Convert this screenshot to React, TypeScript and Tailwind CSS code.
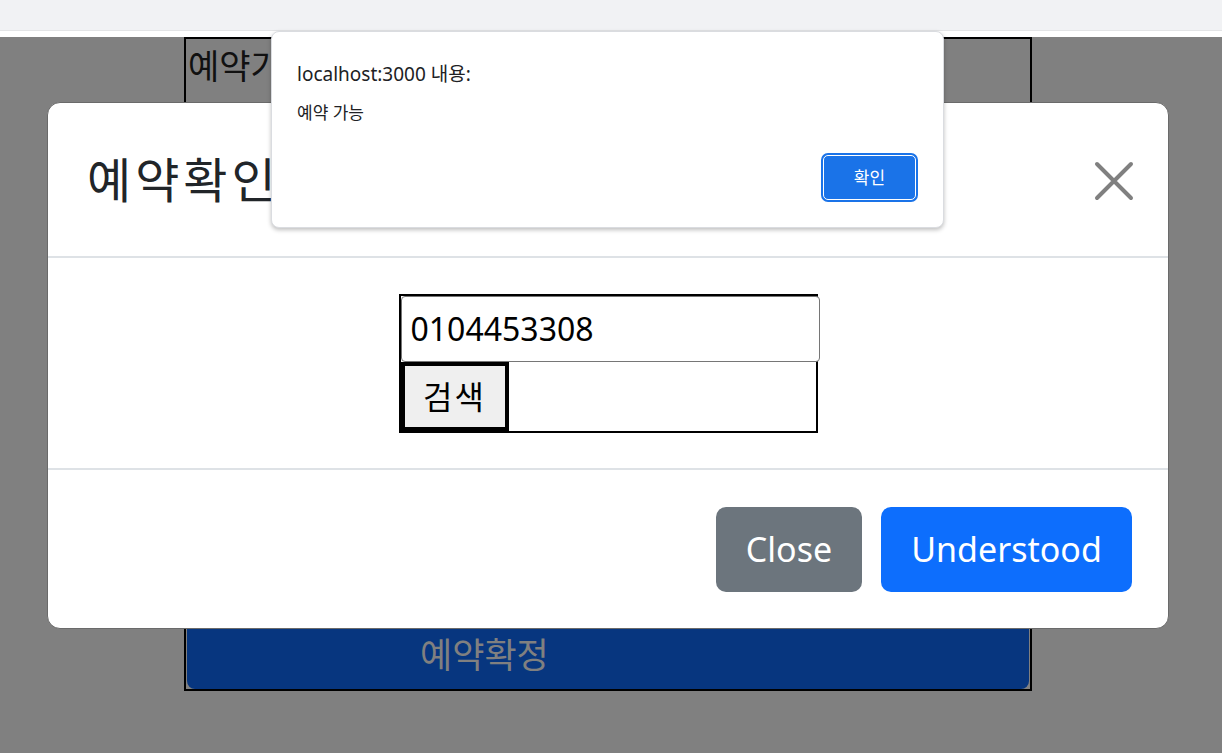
export default function App() {
  return (
    <div
      className="relative w-[1222px] h-[753px] overflow-hidden flex flex-col bg-[#808080]"
      style={{ fontFamily: '"Noto Sans", "Noto Sans CJK KR", sans-serif' }}
    >
      {/* browser strip */}
      <div className="h-[31px] bg-[#f1f2f4] border-b border-[#e3e4e6] shrink-0" />
      <div className="h-[6px] bg-white shrink-0" />

      {/* page underneath the backdrop */}
      <div className="flex-1">
        <div className="ml-[184px] w-[848px] h-[654px] border-2 border-black flex flex-col justify-between">
          <div className="pl-[2px] pt-[2px] text-[34px] leading-[50px] text-[#111]">예약가능</div>
          <div className="h-[62px] bg-[#07367f] rounded-b-[8px] mx-[1px] pl-[233px] pt-[2px] text-[35px] leading-[52px] text-[#808080]">
            예약확정
          </div>
        </div>
      </div>

      {/* modal */}
      <div className="absolute left-[47px] top-[102px] w-[1122px] h-[527px] bg-white rounded-[13px] border border-[#6a6a6a] flex flex-col">
        <div className="h-[155px] border-b-2 border-[#dee2e6] flex items-center justify-between pl-[39px] pr-[34px] shrink-0">
          <h5 className="text-[48px] tracking-[4px] text-[#212529] leading-none">예약확인</h5>
          <svg width="40" height="40" viewBox="0 0 40 40" className="mt-[2px]">
            <path d="M3 3 L37 37 M37 3 L3 37" stroke="#808080" strokeWidth="4" strokeLinecap="round" />
          </svg>
        </div>
        <div className="h-[212px] border-b-2 border-[#dee2e6] flex justify-center pt-[36px] shrink-0">
          <div className="w-[419px] h-[139px] border-2 border-black flex flex-col">
            <div className="w-[419px] h-[67px] border border-[#767676] rounded-[4px] bg-white flex items-center pl-[9px] text-[32px] text-black">
              0104453308
            </div>
            <div className="flex">
              <div className="w-[108px] h-[69px] border-4 border-black bg-[#efefef] flex items-center justify-center text-[32px] tracking-[2px] text-black">
                검색
              </div>
            </div>
          </div>
        </div>
        <div className="flex-1 flex justify-end items-start pt-[37px] pr-[36px] gap-[19px]">
          <button className="w-[146px] h-[85px] rounded-[10px] bg-[#6c757d] text-white text-[34px]">Close</button>
          <button className="w-[251px] h-[85px] rounded-[10px] bg-[#0d6efd] text-white text-[34px]">Understood</button>
        </div>
      </div>

      {/* browser alert */}
      <div className="absolute left-[271px] top-[31px] w-[673px] h-[197px] bg-white rounded-[8px] border border-[#dadce0] shadow-[0_2px_4px_rgba(0,0,0,0.25)] flex flex-col px-[25px]">
        <div className="mt-[28px] text-[19px] leading-[28px] text-[#202124]">localhost:3000 내용:</div>
        <div className="mt-[12px] text-[17px] leading-[26px] text-[#202124]">예약 가능</div>
        <div className="mt-[27px] flex justify-end">
          <div className="w-[97px] h-[49px] rounded-[7px] border-2 border-[#1a73e8] bg-[#1a73e8] flex">
            <div className="flex-1 rounded-[5px] border border-white flex items-center justify-center text-white text-[17px]">
              확인
            </div>
          </div>
        </div>
      </div>
    </div>
  );
}
